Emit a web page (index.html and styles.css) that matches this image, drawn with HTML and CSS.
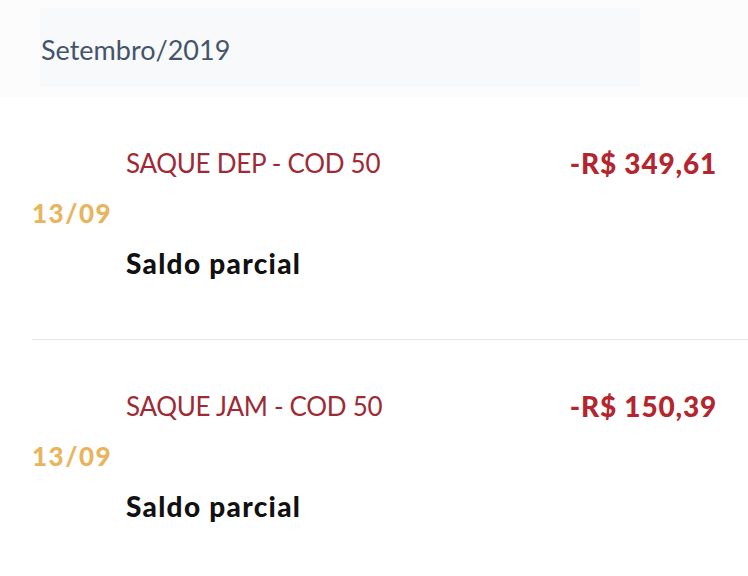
FILE: index.html
```html
<!DOCTYPE html>
<html lang="pt-BR">
<head>
<meta charset="utf-8">
<title>Extrato</title>
<link rel="stylesheet" href="styles.css">
</head>
<body>
<header class="band">
  <div class="month">Setembro/2019</div>
</header>
<main class="list">
  <section class="entry">
    <div class="line title-line">
      <span class="desc">SAQUE DEP - COD 50</span>
      <span class="amount">-R$ 349,61</span>
    </div>
    <div class="date">13/09</div>
    <div class="balance">Saldo parcial</div>
  </section>
  <section class="entry">
    <div class="line title-line">
      <span class="desc">SAQUE JAM - COD 50</span>
      <span class="amount">-R$ 150,39</span>
    </div>
    <div class="date">13/09</div>
    <div class="balance">Saldo parcial</div>
  </section>
</main>
</body>
</html>
```
FILE: styles.css
```css
html, body {
  margin: 0;
  padding: 0;
  background: #ffffff;
}
body {
  font-family: Lato, "Open Sans", sans-serif;
  width: 748px;
  overflow: hidden;
}
.band {
  background: #fcfcfd;
  padding: 8px 108px 10px 40px;
}
.month {
  background: #f8f9fb;
  height: 79px;
  box-sizing: border-box;
  padding: 3px 0 0 1px;
  display: flex;
  align-items: center;
  font-size: 27px;
  font-weight: 400;
  color: #44546b;
}
.list {
  padding-left: 32px;
}
.entry {
  display: grid;
  grid-template-columns: 94px 1fr;
  grid-template-rows: 50px 50px 50px;
  padding: 41px 31px 51px 0;
  border-bottom: 1px solid #e6e6e6;
}
.title-line {
  grid-column: 2;
  grid-row: 1;
  display: flex;
  justify-content: space-between;
  align-items: center;
}
.desc {
  font-size: 26px;
  letter-spacing: -0.3px;
  color: #9d2b36;
  font-weight: 400;
}
.amount {
  font-size: 28px;
  letter-spacing: 0.8px;
  font-weight: 900;
  color: #b3262f;
}
.date {
  grid-column: 1;
  grid-row: 2;
  display: flex;
  align-items: center;
  font-size: 26px;
  letter-spacing: 1.5px;
  font-weight: 900;
  color: #e8b55e;
}
.balance {
  grid-column: 2;
  grid-row: 3;
  display: flex;
  align-items: center;
  font-size: 28px;
  letter-spacing: 1.3px;
  font-weight: 900;
  color: #111111;
}
```
